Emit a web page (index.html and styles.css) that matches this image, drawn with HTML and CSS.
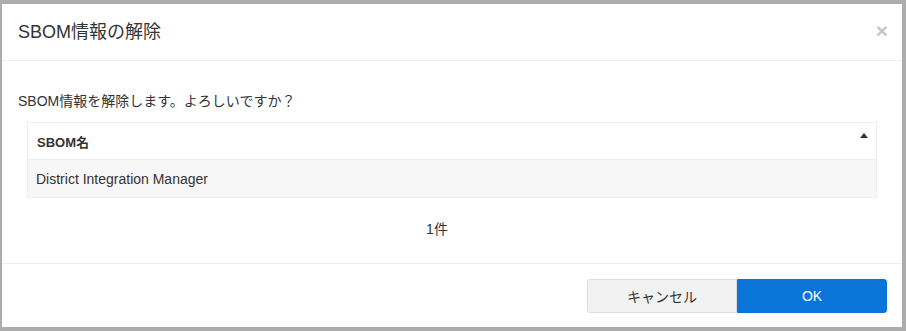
FILE: index.html
```html
<!DOCTYPE html>
<html lang="ja">
<head>
    <meta charset="UTF-8">
    <title>SBOM情報の解除</title>
    <link rel="stylesheet" href="styles.css">
</head>
<body>
    <div class="modal">
        <div class="modal-header">
            <h4 class="modal-title">SBOM情報の解除</h4>
            <button class="close" type="button">×</button>
        </div>
        <div class="modal-body">
            <p class="message">SBOM情報を解除します。よろしいですか？</p>
            <table class="sbom-table">
                <thead>
                    <tr>
                        <th>SBOM名<span class="sort-caret"></span></th>
                    </tr>
                </thead>
                <tbody>
                    <tr>
                        <td>District Integration Manager</td>
                    </tr>
                </tbody>
            </table>
            <div class="count">1件</div>
        </div>
        <div class="modal-footer">
            <button class="btn btn-cancel" type="button">キャンセル</button>
            <button class="btn btn-ok" type="button">OK</button>
        </div>
    </div>
</body>
</html>
```

FILE: styles.css
```css
body {
    margin: 0;
    padding: 4px 0 0 2px;
    background-color: #acacac;
    font-family: "Liberation Sans", "Noto Sans CJK JP", sans-serif;
    color: #333;
    font-size: 14px;
}
.modal {
    width: 900px;
    height: 323px;
    background-color: #fff;
    display: flex;
    flex-direction: column;
}
.modal-header {
    position: relative;
    padding: 15px 16px;
    border-bottom: 1px solid #eeeeee;
}
.modal-title {
    margin: 0;
    font-size: 18px;
    font-weight: normal;
    line-height: 26px;
    color: #333;
}
.close {
    position: absolute;
    top: 14px;
    right: 14px;
    padding: 0;
    border: none;
    background: none;
    font-family: "Liberation Sans", sans-serif;
    font-size: 21px;
    font-weight: bold;
    line-height: 26px;
    color: #c6c6c6;
    cursor: pointer;
}
.modal-body {
    padding: 30px 16px 24px;
    border-bottom: 1px solid #eeeeee;
}
.message {
    margin: 0 0 11px;
    line-height: 20px;
}
.sbom-table {
    width: 850px;
    margin-left: 9px;
    border-collapse: collapse;
    border: 1px solid #eeeeee;
}
.sbom-table th {
    position: relative;
    text-align: left;
    font-size: 13px;
    font-weight: bold;
    height: 36px;
    padding: 0 9px;
    border-bottom: 1px solid #eeeeee;
}
.sbom-table td {
    height: 37px;
    padding: 0 8px;
    background-color: #f7f7f7;
}
.sort-caret {
    position: absolute;
    top: 10px;
    right: 8px;
    width: 0;
    height: 0;
    border-left: 4px solid transparent;
    border-right: 4px solid transparent;
    border-bottom: 5px solid #333;
}
.count {
    margin-top: 21px;
    padding-right: 30px;
    text-align: center;
    line-height: 20px;
}
.modal-footer {
    display: flex;
    justify-content: flex-end;
    padding: 15px 15px 0;
}
.btn {
    width: 150px;
    height: 34px;
    font-family: "Liberation Sans", "Noto Sans CJK JP", sans-serif;
    font-size: 14px;
    cursor: pointer;
}
.btn-cancel {
    background-color: #f2f2f2;
    border: 1px solid #dddddd;
    border-radius: 3px 0 0 3px;
    color: #333;
}
.btn-ok {
    background-color: #0a74d9;
    border: 1px solid #0a74d9;
    border-radius: 0 3px 3px 0;
    color: #fff;
}
```
